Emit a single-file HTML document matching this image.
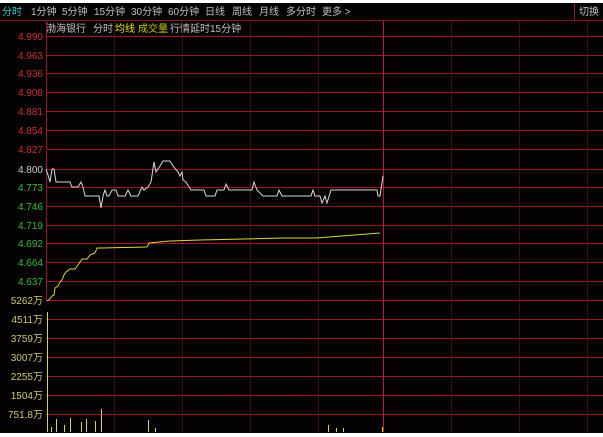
<!DOCTYPE html>
<html><head><meta charset="utf-8"><style>
html,body{margin:0;padding:0;background:#fff;width:603px;height:437px;overflow:hidden}
svg{display:block}
text{font-family:"Liberation Sans","Noto Sans CJK SC",sans-serif;font-size:10px}
</style></head><body>
<svg width="603" height="437" xmlns="http://www.w3.org/2000/svg">
<rect x="0" y="3" width="603" height="430" fill="#050203"/>
<line x1="0" y1="20.5" x2="603" y2="20.5" stroke="#8a1a28"/>
<line x1="574.5" y1="3" x2="574.5" y2="20" stroke="#8a1a28"/>
<g fill="#c0c0c0">
<text x="2" y="15" fill="#2fc8c8">分时</text>
<text x="31" y="15">1分钟</text><text x="62" y="15">5分钟</text><text x="94" y="15">15分钟</text>
<text x="131" y="15">30分钟</text><text x="168" y="15">60分钟</text><text x="205" y="15">日线</text>
<text x="232" y="15">周线</text><text x="259" y="15">月线</text><text x="286" y="15">多分时</text><text x="322" y="15">更多 &gt;</text>
<text x="579" y="15">切换</text>
<text x="46" y="32">渤海银行</text><text x="93" y="32">分时</text>
<text x="115" y="32" fill="#e8e800">均线</text><text x="138" y="32" fill="#c8c800">成交量</text>
<text x="170" y="32">行情延时15分钟</text>
</g>
<g stroke="#3a0e14">
<line x1="114.5" y1="21" x2="114.5" y2="432"/><line x1="182.5" y1="21" x2="182.5" y2="432"/>
<line x1="250.5" y1="21" x2="250.5" y2="432"/><line x1="318.5" y1="21" x2="318.5" y2="432"/>
<line x1="451.5" y1="21" x2="451.5" y2="432"/><line x1="519.5" y1="21" x2="519.5" y2="432"/>
<line x1="587.5" y1="21" x2="587.5" y2="432"/>
</g>
<g stroke="#a01428">
<line x1="46" y1="36.5" x2="603" y2="36.5"/><line x1="46" y1="55.5" x2="603" y2="55.5"/>
<line x1="46" y1="73.5" x2="603" y2="73.5"/><line x1="46" y1="92.5" x2="603" y2="92.5"/>
<line x1="46" y1="111.5" x2="603" y2="111.5"/><line x1="46" y1="130.5" x2="603" y2="130.5"/>
<line x1="46" y1="149.5" x2="603" y2="149.5"/><line x1="46" y1="169.5" x2="603" y2="169.5"/>
<line x1="46" y1="187.5" x2="603" y2="187.5"/><line x1="46" y1="206.5" x2="603" y2="206.5"/>
<line x1="46" y1="225.5" x2="603" y2="225.5"/><line x1="46" y1="243.5" x2="603" y2="243.5"/>
<line x1="46" y1="262.5" x2="603" y2="262.5"/><line x1="46" y1="281.5" x2="603" y2="281.5"/>
<line x1="46" y1="300.5" x2="603" y2="300.5"/><line x1="46" y1="319.5" x2="603" y2="319.5"/>
<line x1="46" y1="338.5" x2="603" y2="338.5"/><line x1="46" y1="357.5" x2="603" y2="357.5"/>
<line x1="46" y1="376.5" x2="603" y2="376.5"/><line x1="46" y1="395.5" x2="603" y2="395.5"/>
<line x1="46" y1="414.5" x2="603" y2="414.5"/>
<line x1="46.5" y1="21" x2="46.5" y2="300"/>
</g>
<line x1="383.5" y1="21" x2="383.5" y2="432" stroke="#c01830"/>
<g text-anchor="end" font-size="10">
<text x="43" y="40" fill="#d03030">4.990</text><text x="43" y="59" fill="#d03030">4.963</text>
<text x="43" y="77" fill="#d03030">4.936</text><text x="43" y="96" fill="#d03030">4.908</text>
<text x="43" y="115" fill="#d03030">4.881</text><text x="43" y="134" fill="#d03030">4.854</text>
<text x="43" y="153" fill="#d03030">4.827</text><text x="43" y="173" fill="#d0d0d0">4.800</text>
<text x="43" y="191" fill="#30c030">4.773</text><text x="43" y="210" fill="#30c030">4.746</text>
<text x="43" y="229" fill="#30c030">4.719</text><text x="43" y="247" fill="#30c030">4.692</text>
<text x="43" y="266" fill="#30c030">4.664</text><text x="43" y="285" fill="#30c030">4.637</text>
<text x="43" y="304" fill="#c8c870">5262万</text><text x="43" y="323" fill="#c8c870">4511万</text>
<text x="43" y="342" fill="#c8c870">3759万</text><text x="43" y="361" fill="#c8c870">3007万</text>
<text x="43" y="380" fill="#c8c870">2255万</text><text x="43" y="399" fill="#c8c870">1504万</text>
<text x="43" y="418" fill="#c8c870">751.8万</text>
</g>
<polyline fill="none" stroke="#d8d8d8" stroke-width="1" points="46,169 48,175 50,182 52,169 54,169 56,182 70,182 72,187 78,187 81,182 83,187 85,196 99,196 101,208 103,196 105,190 107,196 109,196 112,190 116,190 118,196 125,196 128,190 131,196 138,196 142,187 144,190 148,187 151,182 154,162 156,172 160,166 163,161 170,161 173,166 178,172 180,176 182,172 183,180 186,182 191,190 204,190 206,196 215,196 217,190 224,190 226,184 229,190 252,190 254,182 257,190 263,196 277,196 279,190 282,196 311,196 313,190 315,196 320,196 322,203 325,196 327,203 331,190 377,190 378,196 380,196 383,176"/>
<polyline fill="none" stroke="#d8d838" stroke-width="1" points="47,301 50,299 52,296 54,295 55,288 58,286 60,282 62,280 64,275 66,272 70,269 75,269 78,265 80,262 82,259 87,259 90,255 95,253 97,248 102,248 147,247 149,243 170,241 200,240 243,239 284,238 316,238 380,233"/>
<g stroke="#d8d838">
<line x1="47.5" y1="312" x2="47.5" y2="432"/>
<line x1="51.5" y1="427" x2="51.5" y2="432"/><line x1="56.5" y1="419" x2="56.5" y2="432"/>
<line x1="64.5" y1="425" x2="64.5" y2="432"/><line x1="70.5" y1="418" x2="70.5" y2="432"/>
<line x1="81.5" y1="422" x2="81.5" y2="432"/><line x1="86.5" y1="419" x2="86.5" y2="432"/>
<line x1="95.5" y1="421" x2="95.5" y2="432"/><line x1="101.5" y1="409" x2="101.5" y2="432"/>
<line x1="148.5" y1="420" x2="148.5" y2="432"/><line x1="155.5" y1="428" x2="155.5" y2="432"/>
<line x1="328.5" y1="425" x2="328.5" y2="432"/><line x1="336.5" y1="428" x2="336.5" y2="432"/>
<line x1="343.5" y1="428" x2="343.5" y2="432"/><line x1="382.5" y1="427" x2="382.5" y2="432"/>
</g>
</svg>
</body></html>
